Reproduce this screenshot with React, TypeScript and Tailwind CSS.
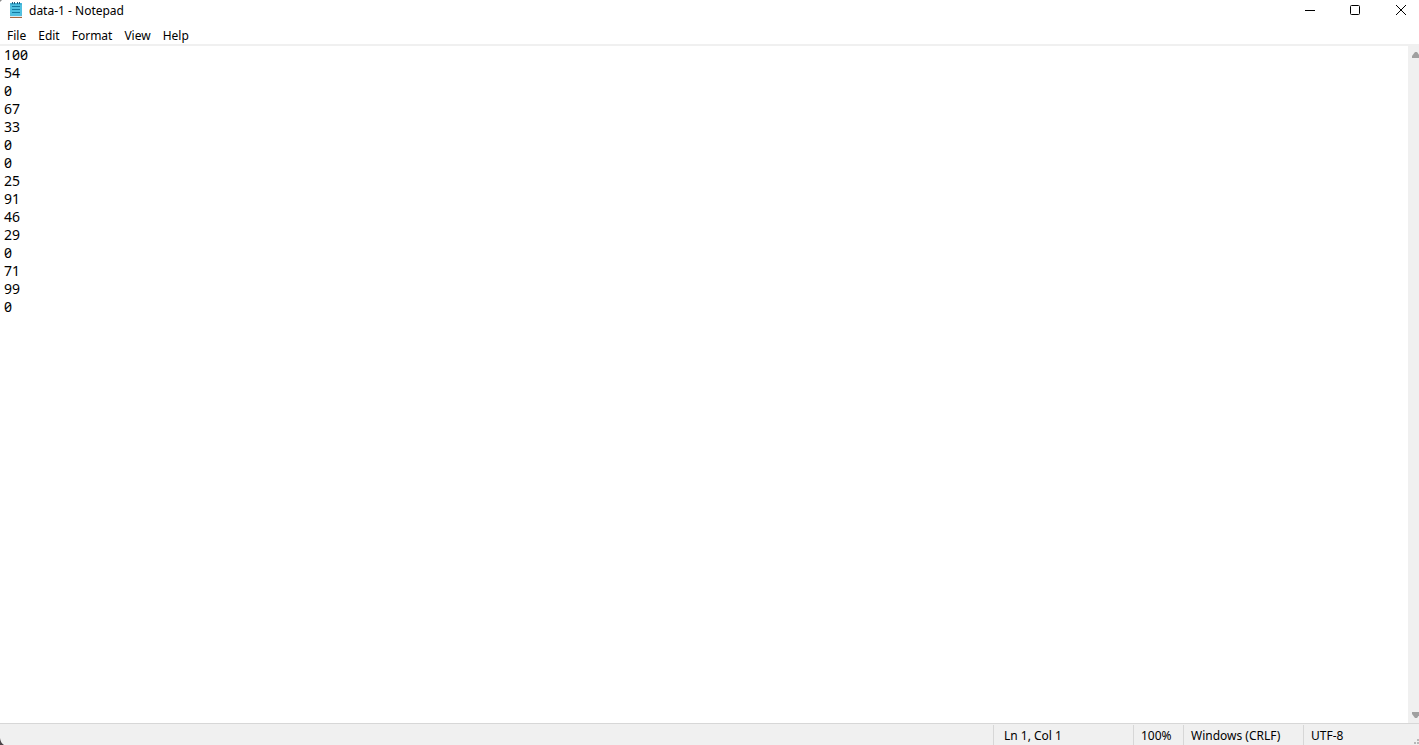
import React, { useState } from "react";

const MENUS = ["File", "Edit", "Format", "View", "Help"];
const CONTENT = [100, 54, 0, 67, 33, 0, 0, 25, 91, 46, 29, 0, 71, 99, 0].join("\n");

function NotepadIcon() {
  return (
    <svg width="14" height="17" viewBox="0 0 14 17" aria-hidden="true">
      <rect x="1" y="13" width="12" height="3" rx="1" fill="#a5673f" />
      <rect x="1" y="1" width="12" height="13" rx="1" fill="#50c0e0" />
      <path d="M1 14.5H13" stroke="#dfe9ec" strokeWidth="1" />
      <path d="M1 15.5H13" stroke="#a5673f" strokeWidth="1" />
      <rect x="1" y="1" width="12" height="2" rx="1" fill="#3fb0d4" />
      <path d="M3.5 0V2M5.5 0V2M8.5 0V2M10.5 0V2" stroke="#1f5f80" strokeWidth="1" />
      <path d="M3 4.5H11M3 7.5H11M3 10.5H11" stroke="#14789f" strokeWidth="1" />
    </svg>
  );
}

function TitleBar() {
  return (
    <header className="relative flex h-[26px] shrink-0 items-start justify-between bg-white">
      <svg className="absolute top-0 left-0" width="2" height="2" viewBox="0 0 2 2" aria-hidden="true">
        <path d="M0 0H2L0 2Z" fill="#8a8a8a" />
      </svg>
      <div className="flex h-[21px] items-center gap-[6px] pl-[9px]">
        <NotepadIcon />
        <h1 className="text-[12px] leading-4">data-1 - Notepad</h1>
      </div>
      <div className="flex h-5 shrink-0">
        <button type="button" aria-label="Minimize" className="flex w-[46px] items-center justify-center">
          <svg width="12" height="12" viewBox="0 0 12 12">
            <path d="M1 6.5H11" stroke="#000" />
          </svg>
        </button>
        <button type="button" aria-label="Maximize" className="flex w-[44px] items-center justify-center">
          <svg width="12" height="12" viewBox="0 0 12 12">
            <rect x="1.5" y="1.5" width="9" height="9" rx="1" fill="none" stroke="#000" />
          </svg>
        </button>
        <button type="button" aria-label="Close" className="flex w-[42px] items-center justify-center pl-[6px]">
          <svg width="12" height="12" viewBox="0 0 12 12">
            <path d="M1 1L11 11M11 1L1 11" stroke="#000" />
          </svg>
        </button>
      </div>
    </header>
  );
}

function ScrollBar() {
  return (
    <div className="flex w-[11px] shrink-0 flex-col justify-between overflow-hidden bg-[#f0f0f0] pt-px">
      <button type="button" aria-label="Scroll up" className="flex h-[17px] items-center pl-1">
        <svg className="shrink-0" width="8" height="7" viewBox="0 0 8 7">
          <path d="M0 6V4L3 0H5L8 4V6Z" fill="#a0a0a0" />
        </svg>
      </button>
      <button type="button" aria-label="Scroll down" className="flex h-4 items-center pl-1">
        <svg className="shrink-0" width="8" height="7" viewBox="0 0 8 7">
          <path d="M0 0H8V2L5 6H3L0 2Z" fill="#a0a0a0" />
        </svg>
      </button>
    </div>
  );
}

function StatusBar() {
  return (
    <footer className="flex h-[22px] shrink-0 items-stretch justify-between border-t border-[#d7d7d7] bg-[#f0f0f0] text-[12px] leading-4">
      <svg className="self-end" width="4" height="7" viewBox="0 0 4 7" aria-hidden="true">
        <path d="M0 0Q0.5 5 4 7H0Z" fill="#4a4448" />
      </svg>
      <div className="flex pt-px">
        <span className="w-[140px] border-l border-[#d7d7d7] pt-[3px] pl-[10px]">Ln 1, Col 1</span>
        <span className="w-[50px] border-l border-[#d7d7d7] pt-[3px] pl-[7px]">100%</span>
        <span className="w-[120px] border-l border-[#d7d7d7] pt-[3px] pl-[7px]">Windows (CRLF)</span>
        <span className="w-[110px] border-l border-[#d7d7d7] pt-[3px] pl-[7px]">UTF-8</span>
        <svg className="self-end" width="6" height="7" viewBox="0 0 6 7" aria-hidden="true">
          <path d="M4 1H6V3H4ZM1 4H3V6H1ZM4 4H6V6H4Z" fill="#b8b8b8" />
        </svg>
      </div>
    </footer>
  );
}

export default function App() {
  const [text, setText] = useState(CONTENT);
  return (
    <div className="flex h-screen flex-col bg-white font-['Noto_Sans',sans-serif] text-black">
      <TitleBar />
      <nav aria-label="Menu bar" className="flex h-5 shrink-0 items-end gap-3 border-b-2 border-[#f0f0f0] pl-[7px]">
        {MENUS.map((menu) => (
          <button key={menu} type="button" className="text-[12px] leading-4">
            {menu}
          </button>
        ))}
      </nav>
      <main className="flex min-h-0 flex-1">
        <textarea
          aria-label="Text editor"
          spellCheck={false}
          value={text}
          onChange={(e) => setText(e.target.value)}
          className="min-w-0 flex-1 resize-none overflow-hidden bg-white pl-1 text-[14px] leading-[18px] slashed-zero tabular-nums outline-none"
        />
        <ScrollBar />
      </main>
      <StatusBar />
    </div>
  );
}
